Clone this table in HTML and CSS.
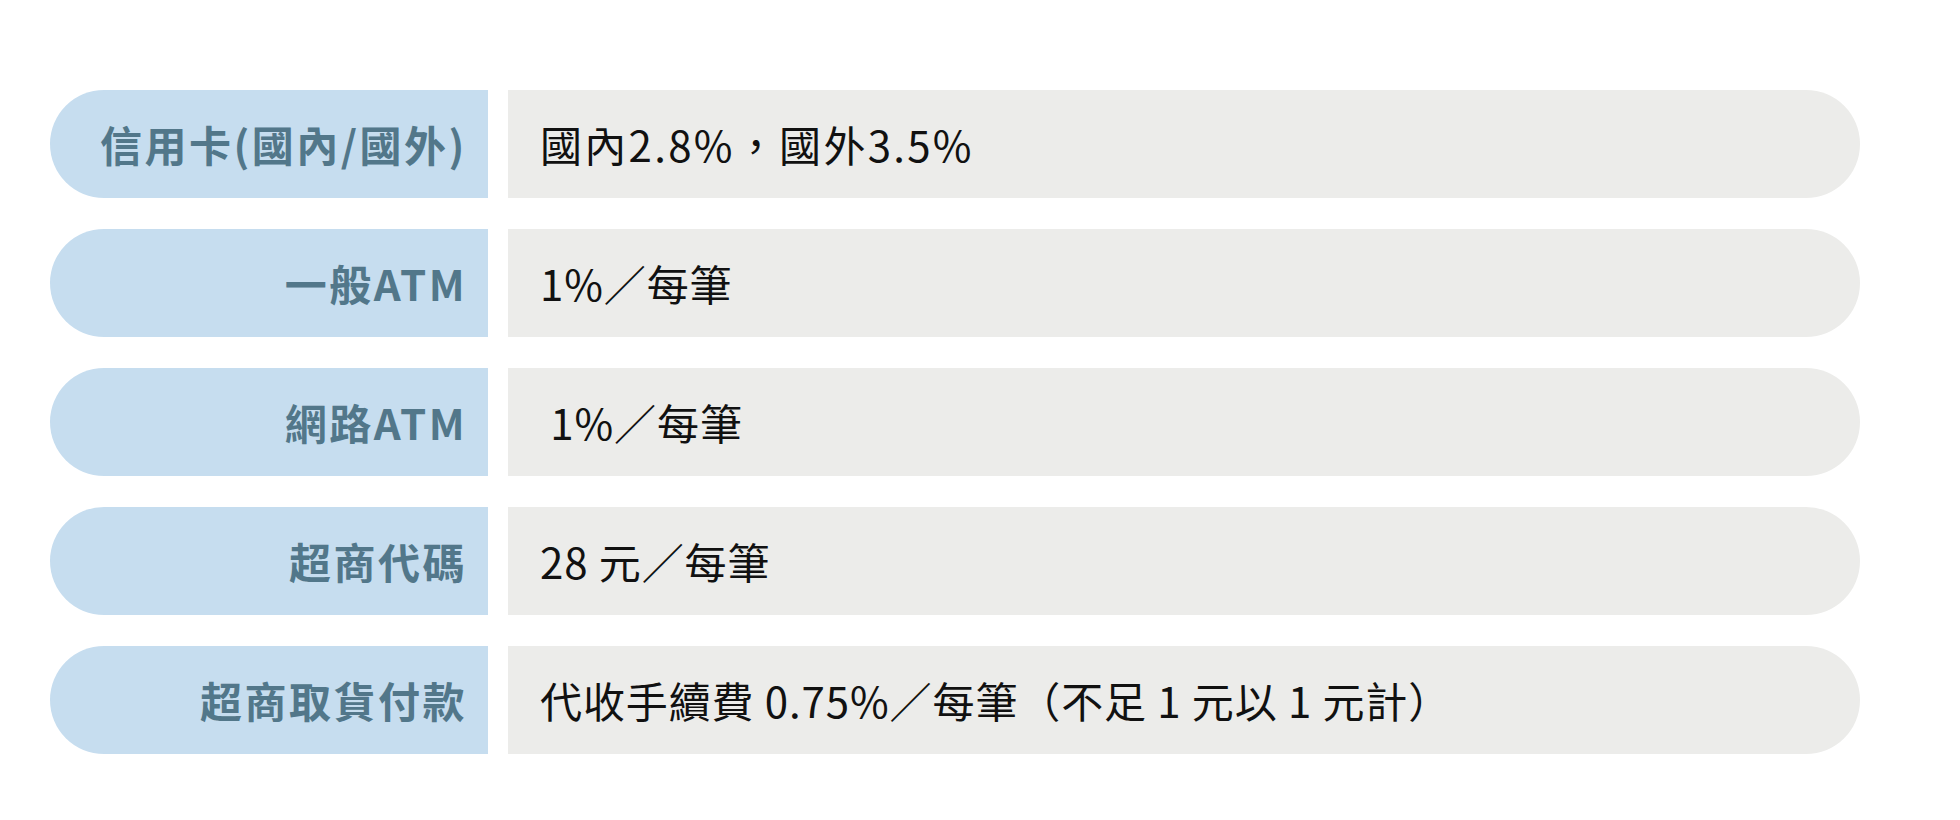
FILE: index.html
```html
<!DOCTYPE html>
<html lang="zh-Hant">
<head>
<meta charset="utf-8">
<title>手續費</title>
<link rel="stylesheet" href="styles.css">
</head>
<body>
<main class="fees">
  <div class="row">
    <div class="label">信用卡(國內/國外)</div>
    <div class="value value-spaced">國內2.8%，國外3.5%</div>
  </div>
  <div class="row">
    <div class="label">一般ATM</div>
    <div class="value">1%／每筆</div>
  </div>
  <div class="row">
    <div class="label">網路ATM</div>
    <div class="value">&nbsp;1%／每筆</div>
  </div>
  <div class="row">
    <div class="label">超商代碼</div>
    <div class="value">28 元／每筆</div>
  </div>
  <div class="row">
    <div class="label">超商取貨付款</div>
    <div class="value">代收手續費 0.75%／每筆（不足 1 元以 1 元計）</div>
  </div>
</main>
</body>
</html>
```

FILE: styles.css
```css
html, body {
  margin: 0;
  padding: 0;
  background: #ffffff;
}

body {
  width: 1960px;
  height: 820px;
  overflow: hidden;
  font-family: "Noto Sans CJK TC", "Noto Sans", sans-serif;
}

.fees {
  display: flex;
  flex-direction: column;
  gap: 31.5px;
  padding: 90px 0 0 50px;
}

.row {
  display: grid;
  grid-template-columns: 438px 1352px;
  column-gap: 20px;
  height: 107.5px;
}

.label {
  display: flex;
  align-items: center;
  justify-content: flex-end;
  padding-right: 21px;
  background: #c6ddef;
  border-radius: 54px 0 0 54px;
  color: #52778a;
  font-weight: 700;
  font-size: 42px;
  letter-spacing: 2.5px;
  white-space: nowrap;
}

.value {
  display: flex;
  align-items: center;
  padding-left: 32px;
  background: #ececea;
  border-radius: 0 54px 54px 0;
  color: #111111;
  font-weight: 400;
  font-size: 42px;
  letter-spacing: 0.9px;
  white-space: pre;
}

.value-spaced {
  letter-spacing: 2.3px;
}
```
